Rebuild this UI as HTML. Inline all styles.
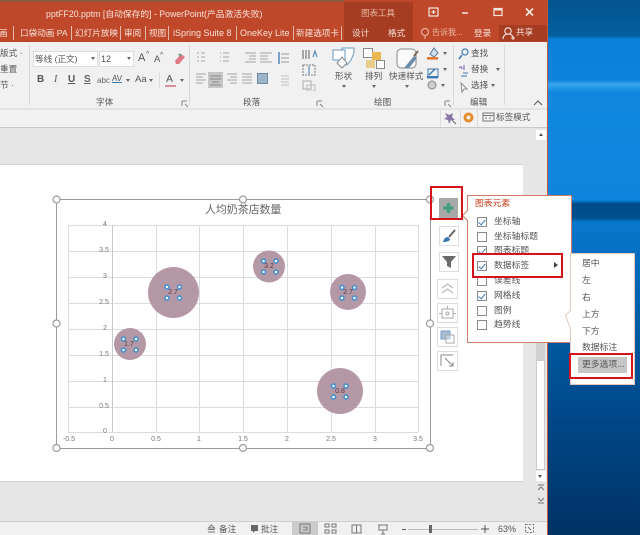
<!DOCTYPE html>
<html><head><meta charset="utf-8">
<style>
html,body{margin:0;padding:0}
body{width:640px;height:535px;overflow:hidden;position:relative;background:#0a7fd8;font-family:"Liberation Sans","Noto Sans CJK SC",sans-serif;font-size:10px;color:#555;filter:blur(.35px)}
div,span,svg{position:absolute}
.t{white-space:nowrap;line-height:12px}
.w{color:#f7e2d9}
.g{color:#555}
.a{font-size:7px;color:#777;transform:translateX(-50%);text-align:center}
.b{background:#f6f6f6;border:1px solid #ddd;box-sizing:border-box}
.c{width:10px;height:10px;border:1px solid #8a8a8a;background:#fff;box-sizing:border-box}
.k:after{content:"";position:absolute;left:2px;top:0;width:3px;height:6px;border:solid #3d78b0;border-width:0 1.5px 1.5px 0;transform:rotate(40deg)}
.r{border:2.5px solid #d4131b;box-sizing:border-box}
.sep{background:#e2b9a8;width:1px;top:26px;height:14px}
.gd{background:#d9d9d9;width:1px;top:45px;height:60px}
.dd{width:0;height:0;border:2px solid transparent;border-top:3px solid #666;border-bottom:0}
</style></head><body>

<!-- desktop -->
<div style="left:548px;top:0;width:92px;height:535px;background:linear-gradient(180deg,#04548f 0,#04609f 36px,#0a80d8 39px,#0c82da 80px,#3aa6ee 84px,#0f88de 92px,#0d85dc 200px,#014a88 204px,#01508f 218px,#0878cc 222px,#0670c4 250px,#00599f 340px,#004788 420px,#003264 535px)"></div>

<!-- window -->
<div style="left:0;top:0;width:547px;height:535px;background:#e6e6e6"></div>
<div style="left:547px;top:0;width:1px;height:535px;background:#c8593a"></div>

<!-- title bar -->
<div style="left:0;top:0;width:547px;height:42px;background:#c0482a"></div>
<div style="left:0;top:0;width:344px;height:2px;background:#8a5a3c"></div>
<div style="left:344px;top:2px;width:69px;height:40px;background:#a63d22"></div>
<div style="left:499px;top:25px;width:48px;height:17px;background:#a63d22"></div>
<div style="left:0;top:41px;width:547px;height:1px;background:#b5452a"></div>
<div class="t w" style="left:46px;top:8px;font-size:8.75px">pptFF20.pptm [自动保存的] - PowerPoint(产品激活失败)</div>
<div class="t" style="left:361px;top:7px;color:#e9b9a5;font-size:8.5px">图表工具</div>
<svg style="left:425px;top:6px" width="115" height="14" fill="none" stroke="#f5e6df" stroke-width="1.2">
<rect x="4" y="2" width="9" height="8"/><path d="M8.5 4v4M6.5 6h4"/>
<path d="M37 7h6" stroke-width="1.5"/>
<rect x="69" y="2.5" width="8" height="7"/><path d="M69 3.5h8" stroke-width="2"/>
<path d="M101 2.5l7 7M108 2.5l-7 7" stroke-width="1.7"/>
</svg>

<!-- tabs -->
<div class="t w" style="left:-1px;top:27px;font-size:8.6px">画</div><div class="sep" style="left:13px"></div>
<div class="t w" style="left:20px;top:27px;font-size:8.6px">口袋动画 PA</div><div class="sep" style="left:71px"></div>
<div class="t w" style="left:75px;top:27px;font-size:8.6px">幻灯片放映</div><div class="sep" style="left:120px"></div>
<div class="t w" style="left:124px;top:27px;font-size:8.6px">审阅</div><div class="sep" style="left:145px"></div>
<div class="t w" style="left:149px;top:27px;font-size:8.6px">视图</div><div class="sep" style="left:168px"></div>
<div class="t w" style="left:173px;top:27px;font-size:9px">iSpring Suite 8</div><div class="sep" style="left:236px"></div>
<div class="t w" style="left:240px;top:27px;font-size:9px">OneKey Lite</div><div class="sep" style="left:293px"></div>
<div class="t w" style="left:296px;top:27px;font-size:8.6px">新建选项卡</div><div class="sep" style="left:341px"></div>
<div class="t w" style="left:352px;top:27px;font-size:8.6px">设计</div>
<div class="t w" style="left:388px;top:27px;font-size:8.6px">格式</div>
<svg style="left:420px;top:27px" width="10" height="14" fill="none" stroke="#eec0ad"><circle cx="5" cy="5" r="3.5"/><path d="M5 9v3"/></svg>
<div class="t" style="left:432px;top:27px;font-size:8px;color:#e9b9a5">告诉我...</div>
<div class="t w" style="left:474px;top:27px;font-size:8.6px">登录</div>
<svg style="left:502px;top:26px" width="13" height="15" fill="none" stroke="#f5e6df" stroke-width="1.1"><circle cx="6" cy="5" r="3.2"/><path d="M1 13c0-3 2-5 5-5s4 1 5 3M9 12h4M11 10v4"/></svg>
<div class="t w" style="left:516px;top:26px;font-size:8.6px">共享</div>

<!-- ribbon -->
<div style="left:0;top:42px;width:547px;height:66px;background:#f1f1f1"></div>
<div style="left:0;top:108px;width:547px;height:2px;background:#e3e3e3"></div>
<div style="left:0;top:110px;width:547px;height:17px;background:#f2f2f2;border-bottom:1px solid #c9c9c9"></div>
<div class="gd" style="left:29px"></div><div class="gd" style="left:189px"></div><div class="gd" style="left:453px"></div><div class="gd" style="left:504px"></div>

<div class="t g" style="left:0;top:47px;font-size:8.6px">版式 ·</div>
<div class="t g" style="left:0;top:63px;font-size:8.6px">重置</div>
<div class="t g" style="left:0;top:79px;font-size:8.6px">节 ·</div>

<!-- font group -->
<div class="b" style="left:33px;top:51px;width:65px;height:16px;background:#fff"></div>
<div class="t g" style="left:35px;top:53px;font-size:8.6px">等线 (正文)</div><div class="dd" style="left:91px;top:57px"></div>
<div class="b" style="left:99px;top:51px;width:35px;height:16px;background:#fff"></div>
<div class="t g" style="left:101px;top:53px;font-size:9px">12</div><div class="dd" style="left:127px;top:57px"></div>
<div class="t g" style="left:138px;top:52px;font-size:11px">A</div><div class="t g" style="left:146px;top:49px;font-size:7px">^</div>
<div class="t g" style="left:154px;top:54px;font-size:9.5px">A</div><div class="t g" style="left:160px;top:50px;font-size:7px">^</div>
<svg style="left:172px;top:51px" width="15" height="15"><path d="M3 10l6-7 4 3-6 7H4z" fill="#e07a86"/><path d="M7 3l2 2" stroke="#6a9a80" stroke-width="2"/></svg>
<div class="t" style="left:37px;top:74px;font-size:10px;font-weight:bold;color:#555">B</div>
<div class="t" style="left:54px;top:74px;font-size:10px;font-style:italic;font-family:'Liberation Serif',serif;color:#555">I</div>
<div class="t" style="left:68px;top:74px;font-size:10px;font-weight:bold;text-decoration:underline;color:#555">U</div>
<div class="t" style="left:84px;top:74px;font-size:10px;font-weight:bold;text-decoration:underline;color:#666">S</div>
<div class="t" style="left:97px;top:75px;font-size:8px;color:#666">abc</div>
<div class="t" style="left:112px;top:73px;font-size:8px;color:#555;text-decoration:underline;text-decoration-color:#3a7ab0">AV</div>
<div class="dd" style="left:126px;top:79px"></div>
<div class="t g" style="left:135px;top:74px;font-size:9.5px">Aa</div><div class="dd" style="left:149px;top:79px"></div>
<div style="left:159px;top:72px;width:1px;height:16px;background:#ddd"></div>
<div class="t" style="left:166px;top:73px;font-size:10.5px;color:#555">A</div>
<div style="left:165px;top:85px;width:11px;height:2px;background:#d8909a"></div><div class="dd" style="left:180px;top:79px"></div>
<div class="t g" style="left:96px;top:96px;font-size:8.6px">字体</div>
<svg style="left:181px;top:100px" width="8" height="8" fill="none" stroke="#888"><path d="M1 1h5M1 1v5M4 4l3 3"/></svg>

<!-- paragraph -->
<svg style="left:194px;top:50px" width="120" height="42" fill="none" stroke="#a5a5a5">
<path d="M3 3h2M7 3h4M3 7h2M7 7h4M3 11h2M7 11h4M26 3h1M29 3h6M26 7h1M29 7h6M26 11h1M29 11h6"/>
<path d="M51 3h11M55 6h7M55 9h7M51 12h11M66 3h12M66 6h8M66 9h8M66 12h12"/>
<path d="M87 4h8M87 8h8M87 12h8" stroke="#999"/><path d="M85 2v12" stroke="#4a7fb5" stroke-width="1.4"/>
<path d="M2 24h10M2 27h7M2 30h10M2 33h7"/>
<path d="M33 24h10M36 27h7M33 30h10M36 33h7"/>
<path d="M48 24h10M48 27h10M48 30h10M48 33h10" stroke-width="1.1"/>
</svg>
<div style="left:208px;top:72px;width:15px;height:16px;background:#c6c6c6"></div>
<svg style="left:208px;top:72px" width="15" height="16" fill="none" stroke="#888"><path d="M2 4h11M2 7h11M4 10h7M2 13h11"/></svg>
<div style="left:257px;top:73px;width:11px;height:11px;background:#9db4c8;border:1px solid #6f8aa6;box-sizing:border-box"></div>
<svg style="left:280px;top:74px" width="10" height="12" fill="none" stroke="#c4c4c4"><path d="M1 2h8M1 5h8M1 8h8M1 11h8"/></svg>
<div class="t g" style="left:243px;top:96px;font-size:8.6px">段落</div>
<svg style="left:316px;top:100px" width="8" height="8" fill="none" stroke="#888"><path d="M1 1h5M1 1v5M4 4l3 3"/></svg>
<svg style="left:300px;top:47px" width="22" height="44" fill="none" stroke="#777"><path d="M3 3v9M6 3v9M9 3v9" stroke-width="1.2"/><path d="M13 10l2-6 2 6" stroke="#3d78b0"/><path d="M3 18h12v10H3z" stroke-dasharray="2 1"/><path d="M9 19v8" stroke="#3d78b0"/><path d="M3 34h8v8H3z" stroke="#aaa"/><path d="M7 38h8v6H7z" stroke="#bbb"/></svg>

<!-- drawing -->
<svg style="left:332px;top:46px" width="24" height="24" fill="none"><path d="M10 2h12v5l-3 7-4 5-5-8z" stroke="#6a9ac0" fill="#fff"/><rect x="1" y="4" width="12" height="10" stroke="#6a9ac0" fill="#fff"/><path d="M10 11l5 6-5 5-5-5z" stroke="#888" fill="#fff"/></svg>
<div class="t g" style="left:335px;top:70px;font-size:8.6px">形状</div><div class="dd" style="left:342px;top:85px"></div>
<div style="left:363px;top:48px;width:8px;height:8px;border:1px solid #888;background:#fff;box-sizing:content-box"></div>
<div style="left:372px;top:52px;width:9px;height:8px;background:#e8b752"></div>
<div style="left:366px;top:60px;width:9px;height:8px;background:#e8cd8a"></div>
<div style="left:376px;top:60px;width:7px;height:7px;border:1px solid #888;background:#fff"></div>
<div class="t g" style="left:365px;top:70px;font-size:8.6px">排列</div><div class="dd" style="left:372px;top:85px"></div>
<svg style="left:395px;top:47px" width="26" height="24" fill="none"><rect x="2" y="2" width="19" height="19" rx="4" stroke="#888" fill="#fafafa"/><path d="M9 21l10-12 3 2-8 10z" fill="#6a8caa"/><path d="M19 9l4-5" stroke="#7a6a5a" stroke-width="2"/></svg>
<div class="t g" style="left:389px;top:70px;font-size:8.6px">快速样式</div><div class="dd" style="left:405px;top:85px"></div>
<svg style="left:426px;top:45px" width="16" height="46" fill="none"><path d="M4 9l4-6 4 5-4 4z" stroke="#5a7a9a" fill="#cfe0ee"/><rect x="1" y="12" width="11" height="2.6" fill="#e07a30"/><path d="M2 24h10v8H2z" stroke="#3d78b0"/><path d="M3 30l6-6" stroke="#3d78b0" stroke-width="1.5"/><rect x="1" y="31" width="11" height="2.4" fill="#3d78b0"/><circle cx="6" cy="40" r="4" fill="#ccc" stroke="#888"/></svg>
<div class="dd" style="left:443px;top:52px"></div><div class="dd" style="left:443px;top:68px"></div><div class="dd" style="left:441px;top:84px"></div>
<div class="t g" style="left:374px;top:96px;font-size:8.6px">绘图</div>
<svg style="left:444px;top:100px" width="8" height="8" fill="none" stroke="#888"><path d="M1 1h5M1 1v5M4 4l3 3"/></svg>

<!-- edit -->
<svg style="left:457px;top:47px" width="14" height="46" fill="none"><circle cx="8" cy="5" r="3" stroke="#3d78b0" stroke-width="1.2"/><path d="M5 8l-3 4" stroke="#3d78b0" stroke-width="1.5"/><path d="M2 21c2-2 3-1 3 1M7 18v5" stroke="#7a5ab0"/><path d="M6 26h5M4 29h6" stroke="#3d78b0"/><path d="M4 36l1 9 2-3 3 0z" stroke="#888" fill="#fff"/></svg>
<div class="t g" style="left:471px;top:47px;font-size:8.6px">查找</div>
<div class="t g" style="left:471px;top:63px;font-size:8.6px">替换</div><div class="dd" style="left:496px;top:68px"></div>
<div class="t g" style="left:471px;top:79px;font-size:8.6px">选择</div><div class="dd" style="left:491px;top:84px"></div>
<div class="t g" style="left:470px;top:96px;font-size:8.6px">编辑</div>
<svg style="left:533px;top:99px" width="10" height="8" fill="none" stroke="#666" stroke-width="1.2"><path d="M1 6l4-4 4 4"/></svg>

<!-- tags row -->
<div style="left:440px;top:110px;width:1px;height:17px;background:#dcdcdc"></div>
<div style="left:460px;top:110px;width:1px;height:17px;background:#dcdcdc"></div>
<div style="left:477px;top:110px;width:1px;height:17px;background:#dcdcdc"></div>
<svg style="left:442px;top:110px" width="16" height="16"><path d="M3 3l4 2 4-2-1 4 3 3-4 0-2 4-1-4-4-1 3-2z" fill="#8a78a8"/><path d="M10 10l4 4" stroke="#666"/></svg>
<svg style="left:462px;top:111px" width="13" height="13"><circle cx="6.5" cy="6.5" r="3.5" fill="none" stroke="#e58a2e" stroke-width="3"/></svg>
<svg style="left:482px;top:112px" width="13" height="11" fill="none" stroke="#777"><rect x="1" y="1" width="11" height="8"/><path d="M1 3.5h11M3 6h2M7 6h2"/></svg>
<div class="t g" style="left:496px;top:111px;font-size:8.6px">标签模式</div>

<!-- slide & scrollbar -->
<div style="left:0;top:164px;width:523px;height:318px;background:#fff;border-top:1px solid #d4d4d4;border-bottom:1px solid #cfcfcf;box-sizing:border-box"></div>
<div style="left:536px;top:130px;width:10px;height:10px;background:#fff"></div>
<div style="left:539px;top:133px;width:0;height:0;border:2.5px solid transparent;border-bottom:3px solid #555;border-top:0"></div>
<div style="left:536px;top:360px;width:9px;height:110px;background:#fff;border:1px solid #ccc;box-sizing:border-box"></div>
<div style="left:536px;top:340px;width:9px;height:20px;background:#d2d2d2"></div>
<div style="left:536px;top:471px;width:10px;height:10px;background:#fff"></div>
<div class="dd" style="left:538px;top:475px;border-width:2.5px;border-top-width:3px;border-top-color:#555;border-bottom:0"></div>
<svg style="left:537px;top:483px" width="9" height="22" fill="none" stroke="#777"><path d="M1 2h6M1 7l3-3 3 3M1 15l3 3 3-3M1 20h6"/></svg>

<!-- status bar -->
<div style="left:0;top:521px;width:547px;height:14px;background:#f1f1f1;border-top:1px solid #cfcfcf;box-sizing:border-box"></div>
<svg style="left:207px;top:524px" width="9" height="10" fill="none" stroke="#777"><path d="M1 8h7M1 5.5h7M4.5 1l-3 3h6z"/></svg>
<div class="t g" style="left:219px;top:523px;font-size:8.6px">备注</div>
<svg style="left:250px;top:524px" width="9" height="10"><path d="M1 1h7v6H5L3 9V7H1z" fill="#666"/></svg>
<div class="t g" style="left:261px;top:523px;font-size:8.6px">批注</div>
<div style="left:292px;top:522px;width:26px;height:13px;background:#cbcbcb"></div>
<svg style="left:298px;top:523px" width="100" height="12" fill="none" stroke="#777"><rect x="2" y="1" width="10" height="9"/><path d="M5 4h4v3H5"/><rect x="27" y="1" width="4" height="3"/><rect x="34" y="1" width="4" height="3"/><rect x="27" y="7" width="4" height="3"/><rect x="34" y="7" width="4" height="3"/><path d="M54 2h9v8h-9zM58.5 2v8"/><path d="M80 2h10M81 2v5h8V2M85 7v4M83 11h4"/></svg>
<div style="left:402px;top:529px;width:4px;height:1px;background:#555"></div>
<div style="left:408px;top:529px;width:70px;height:1px;background:#bbb"></div>
<div style="left:429px;top:525px;width:3px;height:8px;background:#666"></div>
<svg style="left:481px;top:525px" width="8" height="8" stroke="#555"><path d="M4 0v8M0 4h8"/></svg>
<div class="t g" style="left:498px;top:523px;font-size:9px">63%</div>
<svg style="left:525px;top:524px" width="10" height="10" fill="none" stroke="#777"><rect x=".5" y=".5" width="8" height="8" stroke-dasharray="2 1.5"/><path d="M3 3l3 3"/></svg>

<!-- chart -->
<svg style="left:0;top:0" width="640" height="535">
<g stroke="#dcdcdc" stroke-width="1" fill="none">
<path d="M68.5 225v207M156.5 225v207M199.5 225v207M243.5 225v207M287.5 225v207M331.5 225v207M375.5 225v207M418.5 225v207"/>
<path d="M68 225.5h350M68 251.5h350M68 277.5h350M68 303.5h350M68 329.5h350M68 355.5h350M68 381.5h350M68 407.5h350M68 432.5h350"/>
</g>
<path d="M112.5 225v207" stroke="#c8c8c8"/>
<rect x="56.5" y="199.5" width="374" height="249" fill="none" stroke="#9b9b9b"/>
<g fill="#b598a6">
<circle cx="130" cy="344" r="16"/><circle cx="173.5" cy="292.5" r="25.5"/><circle cx="269" cy="266.5" r="16"/><circle cx="348" cy="292" r="18"/><circle cx="340" cy="391" r="23"/>
</g>
<g fill="#fff" stroke="#9b9b9b" stroke-width="1.2">
<circle cx="56.5" cy="199.5" r="3.5"/><circle cx="243" cy="199.5" r="3.5"/><circle cx="430" cy="199.5" r="3.5"/>
<circle cx="56.5" cy="323.5" r="3.5"/><circle cx="430" cy="323.5" r="3.5"/>
<circle cx="56.5" cy="448" r="3.5"/><circle cx="243" cy="448" r="3.5"/><circle cx="430" cy="448" r="3.5"/>
</g>
<g fill="#fff" stroke="#3f8ed2" stroke-width="1.5">
<circle cx="123.5" cy="339" r="2"/><circle cx="136" cy="339" r="2"/><circle cx="123.5" cy="350" r="2"/><circle cx="136" cy="350" r="2"/>
<circle cx="167" cy="287" r="2"/><circle cx="179.5" cy="287" r="2"/><circle cx="167" cy="298" r="2"/><circle cx="179.5" cy="298" r="2"/>
<circle cx="263.5" cy="261" r="2"/><circle cx="276" cy="261" r="2"/><circle cx="263.5" cy="272" r="2"/><circle cx="276" cy="272" r="2"/>
<circle cx="342" cy="287.5" r="2"/><circle cx="354.5" cy="287.5" r="2"/><circle cx="342" cy="298" r="2"/><circle cx="354.5" cy="298" r="2"/>
<circle cx="333.5" cy="386" r="2"/><circle cx="346" cy="386" r="2"/><circle cx="333.5" cy="397" r="2"/><circle cx="346" cy="397" r="2"/>
</g>
</svg>
<div class="t" style="left:205px;top:204px;font-size:11px;color:#666;letter-spacing:-.1px">人均奶茶店数量</div>
<div class="t a" style="left:129px;top:339px;color:#5a3a40">1.7</div>
<div class="t a" style="left:173px;top:287px;color:#5a3a40">2.7</div>
<div class="t a" style="left:269px;top:261px;color:#5a3a40">3.2</div>
<div class="t a" style="left:348px;top:287px;color:#5a3a40">2.7</div>
<div class="t a" style="left:340px;top:386px;color:#5a3a40">0.8</div>

<div class="t a" style="left:105px;top:219px">4</div>
<div class="t a" style="left:104px;top:245px">3.5</div>
<div class="t a" style="left:105px;top:271px">3</div>
<div class="t a" style="left:104px;top:297px">2.5</div>
<div class="t a" style="left:105px;top:323px">2</div>
<div class="t a" style="left:104px;top:349px">1.5</div>
<div class="t a" style="left:105px;top:375px">1</div>
<div class="t a" style="left:104px;top:401px">0.5</div>
<div class="t a" style="left:105px;top:426px">0</div>

<div class="t a" style="left:69px;top:434px">-0.5</div>
<div class="t a" style="left:112px;top:434px">0</div>
<div class="t a" style="left:156px;top:434px">0.5</div>
<div class="t a" style="left:199px;top:434px">1</div>
<div class="t a" style="left:243px;top:434px">1.5</div>
<div class="t a" style="left:287px;top:434px">2</div>
<div class="t a" style="left:331px;top:434px">2.5</div>
<div class="t a" style="left:375px;top:434px">3</div>
<div class="t a" style="left:418px;top:434px">3.5</div>

<!-- side buttons -->
<div style="left:439px;top:198px;width:19px;height:20px;background:#a8a8a8"></div>
<svg style="left:439px;top:198px" width="19" height="20"><path d="M9.5 5v10M4.5 10h10" stroke="#3f9f85" stroke-width="3.2"/></svg>
<div class="b" style="left:439px;top:226px;width:20px;height:20px;background:#fff"></div>
<svg style="left:439px;top:226px" width="20" height="20"><path d="M4 16c1-4 3-5 5-5l2 2c0 2-3 3-7 3z" fill="#3d78b0"/><path d="M10 11l6-7" stroke="#666" stroke-width="2"/></svg>
<div class="b" style="left:439px;top:252px;width:20px;height:20px;background:#fff"></div>
<svg style="left:439px;top:252px" width="20" height="20"><path d="M3 4h14l-5 6v6l-4-2v-4z" fill="#6a6a6a"/></svg>
<div class="b" style="left:437px;top:279px;width:21px;height:20px;background:#fff"></div>
<svg style="left:437px;top:279px" width="21" height="20" fill="none" stroke="#bbb" stroke-width="1.3"><path d="M5 9l5.5-4 5.5 4M5 14l5.5-4 5.500 4"/></svg>
<div class="b" style="left:437px;top:303px;width:21px;height:20px;background:#fff"></div>
<svg style="left:437px;top:303px" width="21" height="20" fill="none" stroke="#aaa"><rect x="5" y="6" width="11" height="9"/><circle cx="10.5" cy="10.5" r="1.5"/><path d="M2 10.5h3M16 10.5h3M10.5 3v3"/></svg>
<div class="b" style="left:437px;top:327px;width:21px;height:20px;background:#fff"></div>
<svg style="left:437px;top:327px" width="21" height="20"><rect x="4" y="4" width="9" height="8" fill="#a7bdd6" stroke="#7c9ac0"/><rect x="9" y="8" width="8" height="8" fill="#fff" fill-opacity=".4" stroke="#aaa"/></svg>
<div class="b" style="left:437px;top:351px;width:21px;height:20px;background:#fff"></div>
<svg style="left:437px;top:351px" width="21" height="20" fill="none" stroke="#888"><path d="M4 15V4h12M8 7l8 8M16 11v4h-4"/></svg>

<!-- menu 1 -->
<svg style="left:460px;top:190px" width="180" height="200"><path d="M7.5 5.5h104v147h-104v-122l-5-5 5-5z" fill="#fff" stroke="#d07a68"/></svg>
<div class="t" style="left:475px;top:197px;font-size:8.8px;color:#c8401f">图表元素</div>
<div class="c k" style="left:477px;top:217px"></div><div class="t g" style="left:494px;top:215px;font-size:8.8px">坐标轴</div>
<div class="c" style="left:477px;top:232px"></div><div class="t g" style="left:494px;top:230px;font-size:8.8px">坐标轴标题</div>
<div class="c k" style="left:477px;top:246px"></div><div class="t g" style="left:494px;top:244px;font-size:8.8px">图表标题</div>
<div class="c" style="left:477px;top:276px"></div><div class="t g" style="left:494px;top:274px;font-size:8.8px">误差线</div>
<div class="c k" style="left:477px;top:291px"></div><div class="t g" style="left:494px;top:289px;font-size:8.8px">网格线</div>
<div class="c" style="left:477px;top:306px"></div><div class="t g" style="left:494px;top:304px;font-size:8.8px">图例</div>
<div class="c" style="left:477px;top:320px"></div><div class="t g" style="left:494px;top:318px;font-size:8.8px">趋势线</div>
<div style="left:472px;top:253px;width:91px;height:24px;background:#fff"></div>
<div class="c k" style="left:477px;top:261px"></div><div class="t g" style="left:494px;top:259px;font-size:8.8px">数据标签</div>
<div style="left:554px;top:262px;width:0;height:0;border:3.5px solid transparent;border-left:4px solid #444;border-right:0"></div>

<!-- menu 2 -->
<svg style="left:560px;top:250px" width="80" height="140"><path d="M10.5 3.5h64v131h-64v-56l-5-13 5-5z" fill="#fff" stroke="#e0c8c0"/></svg>
<div class="t g" style="left:582px;top:257px;font-size:8.8px">居中</div>
<div class="t g" style="left:582px;top:274px;font-size:8.8px">左</div>
<div class="t g" style="left:582px;top:291px;font-size:8.8px">右</div>
<div class="t g" style="left:582px;top:308px;font-size:8.8px">上方</div>
<div class="t g" style="left:582px;top:325px;font-size:8.8px">下方</div>
<div class="t g" style="left:582px;top:341px;font-size:8.8px">数据标注</div>
<div style="left:578px;top:357px;width:49px;height:16px;background:#c6c6c6"></div>
<div class="t g" style="left:582px;top:358px;font-size:8.8px">更多选项...</div>

<!-- red highlights -->
<div class="r" style="left:430px;top:186px;width:33px;height:34px"></div>
<div class="r" style="left:472px;top:253px;width:91px;height:25px"></div>
<div class="r" style="left:569px;top:353px;width:64px;height:26px"></div>
</body></html>
